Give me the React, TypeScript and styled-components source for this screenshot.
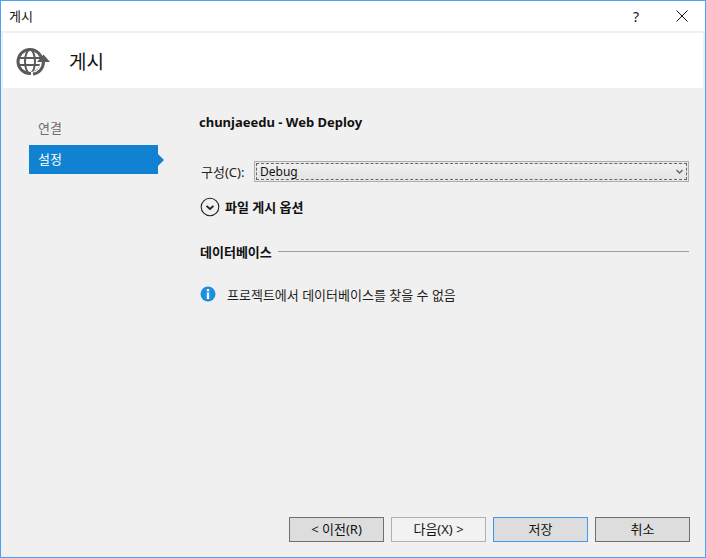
import React from "react";
import styled, { createGlobalStyle } from "styled-components";

const GlobalStyle = createGlobalStyle`
  html, body {
    margin: 0;
    padding: 0;
    background: #f0f0f0;
  }
  body {
    font-family: "Noto Sans", "Noto Sans CJK KR", sans-serif;
    font-size: 13px;
    color: #1e1e1e;
  }
`;

const Window = styled.div`
  box-sizing: border-box;
  width: 706px;
  height: 558px;
  border: 1px solid #4aa3f5;
  background: #f0f0f0;
  display: flex;
  flex-direction: column;
`;

const TitleBar = styled.div`
  height: 30px;
  background: #fff;
  display: flex;
  align-items: center;
  padding-left: 8px;
  flex: none;
`;

const TitleText = styled.span`
  font-size: 13px;
  color: #111;
  flex: 1;
  padding-bottom: 2px;
`;

const TitleButton = styled.div`
  width: 46px;
  height: 30px;
  display: flex;
  align-items: center;
  justify-content: center;
  font-size: 14px;
  color: #111;
`;

const Banner = styled.div`
  height: 55px;
  margin: 2px 2px 0;
  background: #fff;
  display: flex;
  align-items: center;
  padding-left: 13px;
  flex: none;
`;

const BannerTitle = styled.h1`
  margin: 0 0 0 19px;
  font-size: 19px;
  font-weight: 400;
  color: #111;
`;

const Body = styled.div`
  flex: 1;
  display: flex;
  min-height: 0;
`;

const Nav = styled.nav`
  width: 198px;
  flex: none;
  box-sizing: border-box;
  padding: 25px 0 0 28px;
  display: flex;
  flex-direction: column;
`;

const NavItem = styled.div<{ $active?: boolean }>`
  position: relative;
  width: 129px;
  height: 29px;
  margin-bottom: 3px;
  box-sizing: border-box;
  padding: 0 0 ${(p) => (p.$active ? "2px" : "0")} 9px;
  display: flex;
  align-items: center;
  font-size: 13px;
  color: ${(p) => (p.$active ? "#fff" : "#6d6d6d")};
  background: ${(p) => (p.$active ? "#1182d1" : "transparent")};

  ${(p) =>
    p.$active &&
    `&::after {
      content: "";
      position: absolute;
      left: 100%;
      top: 9px;
      border-left: 6px solid #1182d1;
      border-top: 6px solid transparent;
      border-bottom: 6px solid transparent;
    }`}
`;

const Content = styled.div`
  flex: 1;
  min-width: 0;
  display: flex;
  flex-direction: column;
  padding: 25px 16px 0 0;
`;

const PageHeading = styled.div`
  font-size: 13px;
  font-weight: 700;
  color: #111;
  line-height: 18px;
`;

const FormRow = styled.div`
  display: flex;
  align-items: center;
  margin: 30px 0 0 2px;
`;

const FieldLabel = styled.label`
  width: 53px;
  flex: none;
  font-size: 13px;
  color: #222;
  padding-bottom: 1px;
`;

const SelectBox = styled.div`
  flex: 1;
  height: 21px;
  box-sizing: border-box;
  border: 1px solid #acacac;
  background: #e9e9e9;
  padding: 1px;
`;

const SelectInner = styled.div`
  height: 100%;
  box-sizing: border-box;
  border: 1px dashed #666;
  background: linear-gradient(#f0f0f0, #e5e5e5);
  display: flex;
  align-items: center;
  justify-content: space-between;
  padding: 0 3px 0 3px;
  font-size: 12px;
  color: #111;
`;

const ExpanderRow = styled.div`
  display: flex;
  align-items: center;
  gap: 5px;
  margin: 14px 0 0 1px;
  height: 21px;
`;

const ExpanderText = styled.span`
  font-size: 13px;
  font-weight: 700;
  color: #111;
`;

const SectionRow = styled.div`
  display: flex;
  align-items: center;
  gap: 6px;
  margin: 25px 0 0 1px;
  height: 18px;
`;

const SectionTitle = styled.span`
  font-size: 13px;
  font-weight: 700;
  color: #111;
`;

const SectionRule = styled.div`
  flex: 1;
  height: 1px;
  background: #a0a0a0;
`;

const InfoRow = styled.div`
  display: flex;
  align-items: center;
  gap: 11px;
  margin: 25px 0 0 1px;
  height: 18px;
  font-size: 13px;
  color: #1e1e1e;
`;

const Footer = styled.div`
  display: flex;
  justify-content: flex-end;
  gap: 7px;
  padding: 0 15px 15px 0;
  flex: none;
`;

const Button = styled.div<{ $variant?: "plain" | "disabled" | "focus" }>`
  width: 95px;
  height: 25px;
  box-sizing: border-box;
  display: flex;
  align-items: center;
  justify-content: center;
  padding-bottom: 2px;
  font-size: 13px;
  color: #111;
  background: ${(p) => (p.$variant === "disabled" ? "#f2f2f2" : "#dddddd")};
  border: 1px solid
    ${(p) =>
      p.$variant === "disabled"
        ? "#adb2b5"
        : p.$variant === "focus"
          ? "#3c9af0"
          : "#707070"};
`;

const Page = styled.div`
  width: 706px;
  height: 558px;
`;

const GlobeIcon = () => (
  <svg width="34" height="30" viewBox="0 0 34 30" fill="none">
    <circle cx="14" cy="15.500" r="12" stroke="#5a5a5a" strokeWidth="3" />
    <ellipse cx="14" cy="15.500" rx="5" ry="12" stroke="#5a5a5a" strokeWidth="2" />
    <path d="M3 12h22M3 19h22" stroke="#5a5a5a" strokeWidth="2" />
    <path d="M15 29.500c7.500 0 13-5.500 12.500-14.500" stroke="#fff" strokeWidth="7" />
    <path d="M17 28c6 -.5 10.500-5.500 10.500-13" stroke="#5a5a5a" strokeWidth="3" />
    <path d="M21 16 27.500 8.500 34 16z" fill="#5a5a5a" />
  </svg>
);

const ChevronCircle = () => (
  <svg width="20" height="20" viewBox="0 0 20 20" fill="none">
    <circle cx="10" cy="10" r="8.800" stroke="#222" strokeWidth="1.100" />
    <path d="M6.500 8.800 10 12l3.500-3.200" stroke="#222" strokeWidth="1.800" />
  </svg>
);

const InfoIcon = () => (
  <svg width="16" height="16" viewBox="0 0 16 16">
    <circle cx="8" cy="8" r="7.500" fill="#1b8fdc" />
    <rect x="6.800" y="3" width="2.400" height="2.400" fill="#fff" />
    <rect x="6.800" y="6.500" width="2.400" height="6.500" fill="#fff" />
  </svg>
);

const SelectArrow = () => (
  <svg width="7" height="6" viewBox="0 0 7 6" fill="none">
    <path d="M.5 1 3.500 4 6.500 1" stroke="#666" strokeWidth="1.500" />
  </svg>
);

const CloseIcon = () => (
  <svg width="12" height="12" viewBox="0 0 12 12" fill="none">
    <path d="M.5.5l11 11M11.500.5l-11 11" stroke="#111" strokeWidth="1" />
  </svg>
);

const App = () => {
  return (
    <Page>
      <GlobalStyle />
      <Window>
        <TitleBar>
          <TitleText>게시</TitleText>
          <TitleButton>?</TitleButton>
          <TitleButton>
            <CloseIcon />
          </TitleButton>
        </TitleBar>
        <Banner>
          <GlobeIcon />
          <BannerTitle>게시</BannerTitle>
        </Banner>
        <Body>
          <Nav>
            <NavItem>연결</NavItem>
            <NavItem $active>설정</NavItem>
          </Nav>
          <Content>
            <PageHeading>chunjaeedu - Web Deploy</PageHeading>
            <FormRow>
              <FieldLabel>구성(C):</FieldLabel>
              <SelectBox>
                <SelectInner>
                  Debug
                  <SelectArrow />
                </SelectInner>
              </SelectBox>
            </FormRow>
            <ExpanderRow>
              <ChevronCircle />
              <ExpanderText>파일 게시 옵션</ExpanderText>
            </ExpanderRow>
            <SectionRow>
              <SectionTitle>데이터베이스</SectionTitle>
              <SectionRule />
            </SectionRow>
            <InfoRow>
              <InfoIcon />
              프로젝트에서 데이터베이스를 찾을 수 없음
            </InfoRow>
          </Content>
        </Body>
        <Footer>
          <Button>&lt; 이전(R)</Button>
          <Button $variant="disabled">다음(X) &gt;</Button>
          <Button $variant="focus">저장</Button>
          <Button>취소</Button>
        </Footer>
      </Window>
    </Page>
  );
};

export default App;
